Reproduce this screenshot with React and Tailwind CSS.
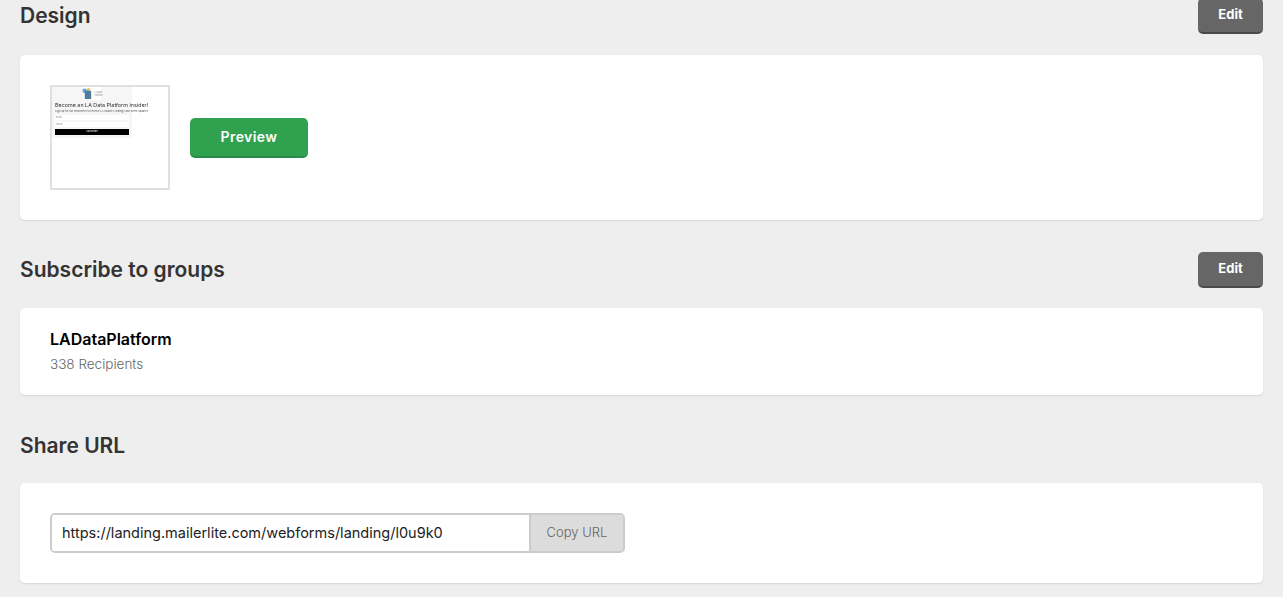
import React from "react";

function SectionHeader({ title, edit }) {
  return (
    <div className="flex h-9 items-center justify-between">
      <h2 className="text-[21px] font-semibold text-[#333333]">{title}</h2>
      {edit && (
        <button className="h-9 w-[65px] rounded-[5px] border-b-2 border-[#4a4a4a] bg-[#666666] text-[13px] font-bold text-white">
          Edit
        </button>
      )}
    </div>
  );
}

function Card({ className, children }) {
  return (
    <div className={`rounded-[5px] bg-white shadow-[0_1px_2px_rgba(0,0,0,0.1)] ${className}`}>
      {children}
    </div>
  );
}

function Thumbnail() {
  return (
    <div className="h-[105px] w-[120px] border-2 border-[#e0e0e0] bg-white">
      <div className="flex h-[51px] w-[80px] flex-col bg-[#f6f6f6] px-[3px] blur-[0.3px]">
        <div className="flex h-[13px] items-center justify-center gap-[2px] bg-white mx-[28px]">
          <svg viewBox="0 0 12 13" className="h-[12px] w-[11px] shrink-0">
            <circle cx="3" cy="3" r="2.5" fill="#5aa9e6" />
            <circle cx="7" cy="2" r="2" fill="#f2c14e" />
            <rect x="3" y="3" width="7" height="9" fill="#4f7d99" />
          </svg>
          <span className="text-[2px] leading-[3px] text-[#888888]">LA Data Platform</span>
        </div>
        <p className="mt-[2px] whitespace-nowrap text-[5.4px] leading-[7px] text-[#333333]">
          Become an LA Data Platform insider!
        </p>
        <p className="whitespace-nowrap text-[2.6px] leading-[4px] text-[#555555]">
          Sign up for our newsletter to receive LA mobility strategy and event updates
        </p>
        <div className="mt-[2px] h-[5px] bg-white pl-[1px] text-[2.4px] leading-[5px] text-[#999999]">Email</div>
        <div className="mt-[2px] h-[5px] bg-white pl-[1px] text-[2.4px] leading-[5px] text-[#999999]">Name</div>
        <div className="mt-[2px] h-[6px] bg-black text-center text-[2.4px] leading-[6px] text-white">Subscribe</div>
      </div>
    </div>
  );
}

export default function App() {
  return (
    <div className="h-[597px] overflow-hidden bg-[#eeeeee] px-5 font-['Inter',sans-serif]">
      <div className="-mt-[1px] pt-[0px]">
        <div className="relative -top-[1px]">
          <SectionHeader title="Design" edit />
        </div>
        <Card className="mt-[20px] flex h-[165px] items-center gap-5 px-[30px]">
          <Thumbnail />
          <button className="h-10 w-[118px] rounded-[5px] border-b-2 border-[#2a8a49] bg-[#30a14f] text-[14px] font-semibold tracking-[0.4px] text-white">
            Preview
          </button>
        </Card>

        <div className="mt-[32px]">
          <SectionHeader title="Subscribe to groups" edit />
        </div>
        <Card className="mt-[20px] h-[87px] px-[30px] pt-[20px]">
          <p className="text-[16px] font-semibold leading-[22px] text-black">LADataPlatform</p>
          <p className="mt-[5px] text-[13.5px] font-light leading-[18px] text-[#666666]">338 Recipients</p>
        </Card>

        <div className="mt-[33px]">
          <SectionHeader title="Share URL" />
        </div>
        <Card className="mt-[19px] flex h-[100px] items-center px-[30px]">
          <div className="flex h-10 w-[575px] overflow-hidden rounded-[5px] border-2 border-[#cccccc]">
            <div className="flex flex-1 items-center bg-white pl-[10px] text-[14.5px] text-[#222222]">
              https://landing.mailerlite.com/webforms/landing/l0u9k0
            </div>
            <button className="w-[94px] border-l-2 border-[#cccccc] bg-[#dcdcdc] text-[13px] font-light text-[#666666]">
              Copy URL
            </button>
          </div>
        </Card>
      </div>
    </div>
  );
}
